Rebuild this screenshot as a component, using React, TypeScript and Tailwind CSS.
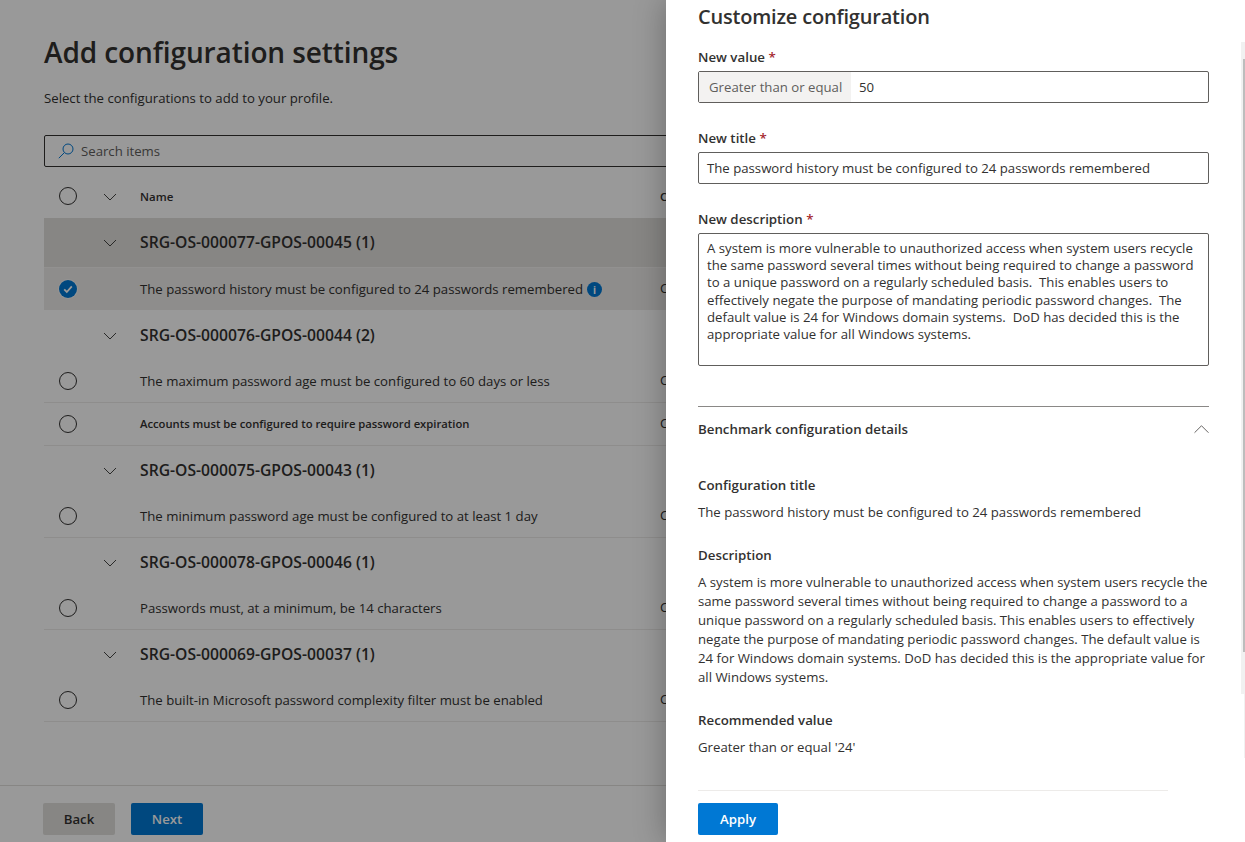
const font = "font-['Open_Sans','Noto_Sans',sans-serif]";

const groups = [
  {
    id: 'SRG-OS-000077-GPOS-00045 (1)',
    selected: true,
    rows: [{ name: 'The password history must be configured to 24 passwords remembered', selected: true, info: true }],
  },
  {
    id: 'SRG-OS-000076-GPOS-00044 (2)',
    rows: [
      { name: 'The maximum password age must be configured to 60 days or less' },
      { name: 'Accounts must be configured to require password expiration', bold: true },
    ],
  },
  {
    id: 'SRG-OS-000075-GPOS-00043 (1)',
    rows: [{ name: 'The minimum password age must be configured to at least 1 day' }],
  },
  {
    id: 'SRG-OS-000078-GPOS-00046 (1)',
    rows: [{ name: 'Passwords must, at a minimum, be 14 characters' }],
  },
  {
    id: 'SRG-OS-000069-GPOS-00037 (1)',
    rows: [{ name: 'The built-in Microsoft password complexity filter must be enabled' }],
  },
] as {
  id: string;
  selected?: boolean;
  rows: { name: string; selected?: boolean; info?: boolean; bold?: boolean }[];
}[];

function Chevron({ up = false, size = 14 }: { up?: boolean; size?: number }) {
  return (
    <svg width={size} height={size} viewBox="0 0 14 14" fill="none" stroke="currentColor" strokeWidth="0.9">
      <path d={up ? 'M0.5 10 L7 3.5 L13.5 10' : 'M1 4 L7 10 L13 4'} />
    </svg>
  );
}

function Radio() {
  return <span className="block w-[18px] h-[18px] rounded-full border border-[#323130]" />;
}

function CheckedRadio() {
  return (
    <span className="flex items-center justify-center w-[18px] h-[18px] rounded-full bg-[#0078d4] ring-1 ring-white/60">
      <svg width="10" height="10" viewBox="0 0 10 10" fill="none" stroke="white" strokeWidth="1.8">
        <path d="M1.2 5.4 L3.8 8 L8.8 2.4" />
      </svg>
    </span>
  );
}

function InfoDot() {
  return (
    <span className="inline-flex items-center justify-center w-[15px] h-[15px] rounded-full bg-[#0078d4] text-white text-[10px] font-bold leading-none ml-[4px]">
      i
    </span>
  );
}

function GroupRow({ id, selected }: { id: string; selected?: boolean }) {
  return (
    <div className={`flex items-center ${selected ? 'h-[50px] bg-[#e1dfdd] border-b border-[#f3f2f1]' : 'h-[49px]'}`}>
      <span className="flex justify-center w-[96px] pl-[36px] text-[#323130]">
        <Chevron />
      </span>
      <span className="text-[15.7px] font-[560] text-[#323130]">{id}</span>
    </div>
  );
}

function ItemRow({ name, selected, info, bold }: { name: string; selected?: boolean; info?: boolean; bold?: boolean }) {
  return (
    <div className={`flex items-center ${selected ? 'h-[42px] mb-[1px] bg-[#edebe9]' : 'h-[43px] border-b border-[#edebe9]'}`}>
      <span className="flex justify-center w-[48px]">{selected ? <CheckedRadio /> : <Radio />}</span>
      <span className="w-[48px]" />
      <span
        className={`flex items-center w-[520px] whitespace-nowrap ${
          bold ? 'text-[11.25px] font-semibold text-[#323130]' : 'pt-[2px] text-[13.2px] text-[#323130]'
        }`}
      >
        {name}
        {info && <InfoDot />}
      </span>
      <span className="text-[13.2px] text-[#323130]">C</span>
    </div>
  );
}

function Label({ text }: { text: string }) {
  return (
    <div className="text-[13.3px] font-[560] text-[#323130] leading-[20px]">
      {text} <span className="text-[#a4262c]">*</span>
    </div>
  );
}

export default function App() {
  return (
    <div className={`relative h-[842px] w-[1245px] overflow-hidden bg-white ${font}`}>
      {/* page behind the panel */}
      <div className="flex flex-col h-full">
        <div className="flex-1 pl-[44px]">
          <h1 className="pt-[33px] text-[28px] leading-[38px] font-semibold text-[#323130] tracking-[-0.1px]">
            Add configuration settings
          </h1>
          <p className="mt-[17px] text-[13.2px] leading-[20px] text-[#323130]">
            Select the configurations to add to your profile.
          </p>
          <div className="flex items-center gap-[7px] mt-[27px] h-[32px] border border-[#323130] rounded-[2px] pl-[13px]">
            <svg width="16" height="16" viewBox="0 0 16 16" fill="none" stroke="#0078d4" strokeWidth="1">
              <circle cx="10" cy="6" r="5" />
              <path d="M6.4 9.6 L0.8 15.2" />
            </svg>
            <span className="pt-[2px] text-[13.2px] text-[#605e5c]">Search items</span>
          </div>
          <div className="flex items-center h-[51px] pt-[6px]">
            <span className="flex justify-center w-[48px]">
              <Radio />
            </span>
            <span className="flex justify-center w-[48px] pr-[12px] pt-[2px] text-[#323130]">
              <Chevron />
            </span>
            <span className="w-[520px] pt-[2px] text-[11.5px] font-semibold text-[#323130]">Name</span>
            <span className="pt-[2px] text-[11.5px] font-semibold text-[#323130]">C</span>
          </div>
          {groups.map((g) => (
            <div key={g.id}>
              <GroupRow id={g.id} selected={g.selected} />
              {g.rows.map((r) => (
                <ItemRow key={r.name} {...r} />
              ))}
            </div>
          ))}
        </div>
        <div className="flex gap-[16px] h-[57px] pl-[43px] pt-[17px] border-t border-[#e1dfdd]">
          <button className="w-[72px] h-[32px] pt-[2px] rounded-[2px] bg-[#e1dfdd] text-[13.2px] font-semibold text-[#323130]">
            Back
          </button>
          <button className="w-[72px] h-[32px] pt-[2px] rounded-[2px] bg-[#0078d4] text-[13.2px] font-semibold text-white">
            Next
          </button>
        </div>
      </div>

      <div className="absolute inset-0 bg-black/40" />

      {/* customize panel */}
      <div className="absolute top-0 right-0 bottom-0 w-[579px] bg-white pl-[32px] shadow-[0_0_30px_rgba(0,0,0,0.3)]">
        <h2 className="pt-[3px] text-[20px] leading-[27px] font-semibold text-[#323130] tracking-[-0.2px]">
          Customize configuration
        </h2>

        <div className="w-[511px]">
          <div className="mt-[17px]">
            <Label text="New value" />
          </div>
          <div className="flex mt-[4px] h-[32px] border border-[#605e5c] rounded-[2px] text-[13.2px] text-[#323130]">
            <span className="flex items-center w-[152px] pt-[2px] pl-[10px] bg-[#f3f2f1] text-[#605e5c] whitespace-nowrap">
              Greater than or equal
            </span>
            <span className="flex items-center pt-[2px] pl-[8px]">50</span>
          </div>

          <div className="mt-[25px]">
            <Label text="New title" />
          </div>
          <div className="flex items-center mt-[4px] h-[32px] pt-[2px] border border-[#605e5c] rounded-[2px] pl-[8px] text-[13.2px] text-[#323130]">
            The password history must be configured to 24 passwords remembered
          </div>

          <div className="mt-[25px]">
            <Label text="New description" />
          </div>
          <div className="mt-[4px] h-[133px] border border-[#605e5c] rounded-[2px] px-[8px] pt-[6px] text-[13.2px] leading-[17.2px] text-[#323130] whitespace-pre-wrap">
            {'A system is more vulnerable to unauthorized access when system users recycle\nthe same password several times without being required to change a password\nto a unique password on a regularly scheduled basis.  This enables users to\neffectively negate the purpose of mandating periodic password changes.  The\ndefault value is 24 for Windows domain systems.  DoD has decided this is the\nappropriate value for all Windows systems.'}
          </div>

          <div className="flex items-center justify-between mt-[40px] h-[46px] border-t border-[#8a8886] text-[#605e5c]">
            <span className="text-[13.3px] font-[560] text-[#323130]">Benchmark configuration details</span>
            <Chevron up size={15} />
          </div>

          <div className="mt-[23px] text-[13.3px] leading-[20px] font-[560] text-[#323130]">Configuration title</div>
          <div className="mt-[7px] text-[13.2px] leading-[20px] text-[#323130]">
            The password history must be configured to 24 passwords remembered
          </div>

          <div className="mt-[23px] text-[13.3px] leading-[20px] font-[560] text-[#323130]">Description</div>
          <div className="mt-[8px] text-[13.2px] leading-[19px] text-[#323130] whitespace-pre-wrap">
            {'A system is more vulnerable to unauthorized access when system users recycle the\nsame password several times without being required to change a password to a\nunique password on a regularly scheduled basis. This enables users to effectively\nnegate the purpose of mandating periodic password changes. The default value is\n24 for Windows domain systems. DoD has decided this is the appropriate value for\nall Windows systems.'}
          </div>

          <div className="mt-[23px] text-[13.3px] leading-[20px] font-[560] text-[#323130]">Recommended value</div>
          <div className="mt-[7px] text-[13.2px] leading-[20px] text-[#323130]">Greater than or equal '24'</div>
        </div>

        <div className="mt-[33px] w-[470px] border-t border-[#edebe9] pt-[12px]">
          <button className="w-[80px] h-[32px] pt-[2px] rounded-[2px] bg-[#0078d4] text-[13.2px] font-semibold text-white">
            Apply
          </button>
        </div>

        {/* scrollbar */}
        <div className="absolute top-[42px] right-0 w-[4px] h-[652px] bg-[#f1f1f1]">
          <div className="ml-[2px] mt-[17px] w-[2px] h-[593px] bg-[#bdbdbd]" />
        </div>
        <div className="absolute top-[694px] right-0 w-[1px] h-[64px] bg-[#f1f1f1]" />
      </div>
    </div>
  );
}
